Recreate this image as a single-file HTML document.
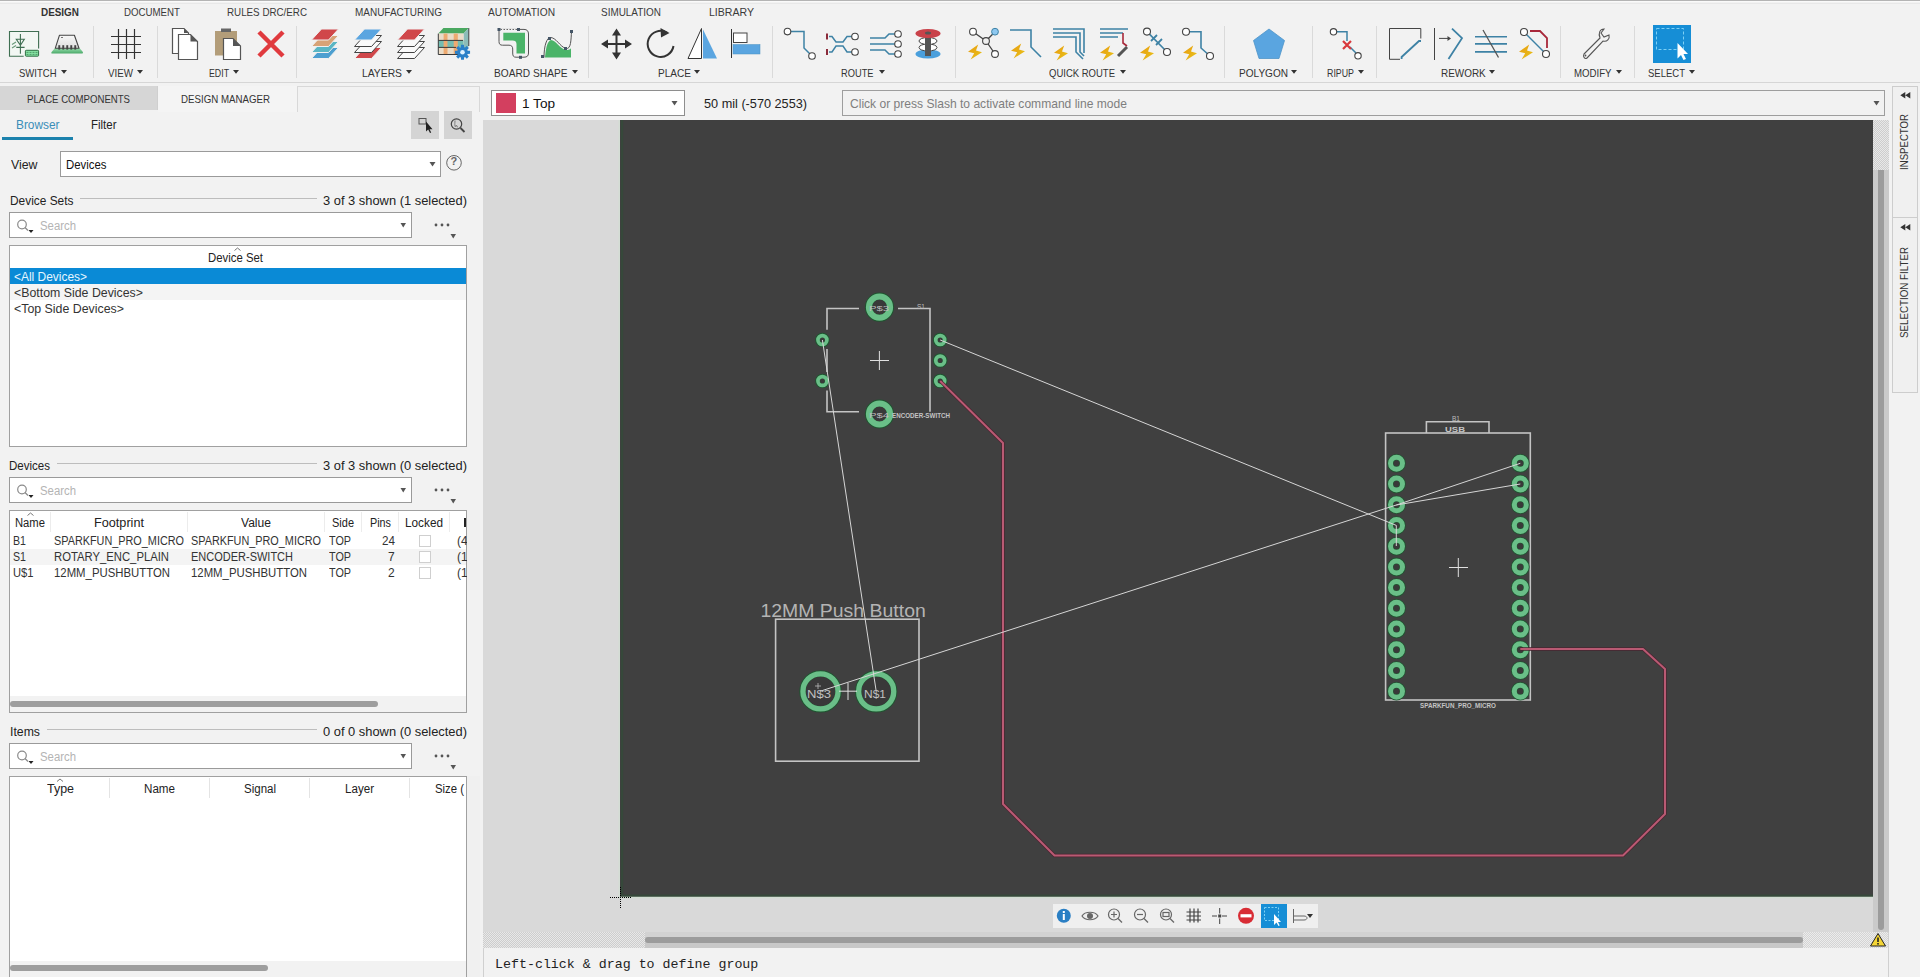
<!DOCTYPE html>
<html><head><meta charset="utf-8">
<style>
*{margin:0;padding:0;box-sizing:border-box}
html,body{width:1920px;height:977px;overflow:hidden;background:#f2f2f2;font-family:"Liberation Sans",sans-serif;color:#222}
.a{position:absolute}
.t{position:absolute;white-space:nowrap;line-height:1}
.tab{font-size:11px;color:#3a3a3a;top:7px}
.rl{font-size:11px;color:#333;top:68px}
.lp{font-size:12.5px;color:#222}
</style></head><body>
<!-- canvas toolbar -->
<div class="a" style="left:491px;top:90px;width:194px;height:26px;background:#fff;border:1px solid #8e8e8e"></div>
<div class="a" style="left:496px;top:93px;width:20px;height:20px;background:#d33f5f"></div>
<div class="t w_33" style="transform:scaleX(1.0067);transform-origin:0 0;left:522px;top:97px;font-size:13.5px;color:#111">1 Top</div>
<div class="t w_103" style="transform:scaleX(0.9401);transform-origin:0 0;left:704px;top:97px;font-size:13.5px;color:#222">50 mil (-570 2553)</div>
<div class="a" style="left:842px;top:90px;width:1043px;height:26px;background:#f2f2f2;border:1px solid #9e9e9e"></div>
<svg class="a" style="left:480px;top:85px" width="1410" height="35" viewBox="480 85 1410 35"><g fill="#555"><path d="M671.5 101h6l-3 4.5z"/><path d="M1873.5 101h6l-3 4.5z"/></g></svg>
<div class="t w_277" style="transform:scaleX(0.9283);transform-origin:0 0;left:849.5px;top:97px;font-size:13px;color:#7e7e7e">Click or press Slash to activate command line mode</div>
<!-- canvas -->
<div class="a" style="left:483px;top:120px;width:1390px;height:812px;background:#d9d9d9"></div>
<!-- vertical scrollbar -->
<div class="a" style="left:1873px;top:120px;width:16px;height:812px;background:#cacaca"></div>
<div class="a" style="left:1873px;top:120px;width:16px;height:50px;background:repeating-conic-gradient(#e8e8e8 0 25%,#cdcdcd 0 50%) 0 0/2px 2px"></div>
<div class="a" style="left:1878px;top:170px;width:6px;height:760px;background:#9c9c9c;border-radius:0 0 3px 3px"></div>
<!-- horizontal scrollbar -->
<div class="a" style="left:483px;top:932px;width:1406px;height:16px;background:#c8c8c8"></div>
<div class="a" style="left:483px;top:932px;width:1406px;height:5px;background:#d2d2d2"></div>
<div class="a" style="left:483px;top:932px;width:162px;height:16px;background:repeating-conic-gradient(#e8e8e8 0 25%,#cdcdcd 0 50%) 0 0/2px 2px"></div>
<div class="a" style="left:1803px;top:932px;width:86px;height:16px;background:repeating-conic-gradient(#ececec 0 25%,#d4d4d4 0 50%) 0 0/2px 2px"></div>
<div class="a" style="left:645px;top:937px;width:1158px;height:6px;background:#9c9c9c;border-radius:3px"></div>
<!-- status bar -->
<div class="a" style="left:483px;top:948px;width:1406px;height:29px;background:#f2f2f2;border-left:1px solid #d0d0d0"></div>
<div class="t" style="left:495px;top:958px;font-family:'Liberation Mono',monospace;font-size:13.3px;color:#222">Left-click &amp; drag to define group</div>
<div class="a" style="left:1888px;top:932px;width:1px;height:45px;background:#d0d0d0"></div>
<!-- right side panel -->
<div class="a" style="left:1892px;top:86px;width:26px;height:132px;background:#f0f0f0;border:1px solid #cdcdcd"></div>
<div class="a" style="left:1892px;top:217px;width:26px;height:176px;background:#f0f0f0;border:1px solid #cdcdcd"></div>
<div class="a" style="left:1899px;top:170px;width:60px;height:14px;transform-origin:0 0;transform:rotate(-90deg)"><div class="t w_56" style="transform:scaleX(0.8752);transform-origin:0 0;left:0;top:0;font-size:11px;color:#333">INSPECTOR</div></div>
<div class="a" style="left:1899px;top:337.5px;width:95px;height:14px;transform-origin:0 0;transform:rotate(-90deg)"><div class="t w_91" style="transform:scaleX(0.8879);transform-origin:0 0;left:0;top:0;font-size:11px;color:#333">SELECTION FILTER</div></div>
<svg class="a" style="left:1890px;top:80px" width="30" height="160" viewBox="1890 80 30 160">
<g fill="#333"><path d="M1900.3 95.2l5-3.2v6.4z M1905.3 95.2l5-3.2v6.4z"/></g>
</svg>
<svg class="a" style="left:1890px;top:220px" width="30" height="20" viewBox="1890 220 30 20">
<g fill="#333"><path d="M1900.3 227.2l5-3.2v6.4z M1905.3 227.2l5-3.2v6.4z"/></g>
</svg>

<!-- board -->
<svg class="a" style="left:483px;top:120px" width="1390" height="812" viewBox="483 120 1390 812">
<rect x="620" y="120" width="1253" height="777" fill="#404040"/>
<path d="M622 120V895.8H1873" stroke="#36483a" stroke-width="2.4" fill="none"/>
<path d="M619.2 120V897.5H1873" stroke="#d3ddd4" stroke-width="1.5" fill="none"/>
<path d="M610 897.5H631M620.5 887V908" stroke="#000" stroke-width="1" stroke-dasharray="1 1"/>
<!-- outlines -->
<g fill="none" stroke="#c4c4c4" stroke-width="1.6">
<path d="M859 308.5H827V329.7M827 349V372M827 390.5V411.7H859M898 308.5H930V411.7"/>
<rect x="775.6" y="619.2" width="143.4" height="142"/>
<rect x="1385.6" y="433" width="144.7" height="267"/>
<path d="M1426.4 433V421.7H1489V433"/>
</g>
<!-- pads -->
<g fill="none" stroke="#1f5530"><circle cx="879.5" cy="307.2" r="10.60" stroke-width="8.00"/><circle cx="879.5" cy="414.0" r="10.60" stroke-width="8.00"/><circle cx="822.4" cy="340.0" r="4.45" stroke-width="5.70"/><circle cx="822.4" cy="381.0" r="4.45" stroke-width="5.70"/><circle cx="940.2" cy="340.0" r="4.45" stroke-width="5.70"/><circle cx="940.2" cy="360.5" r="4.45" stroke-width="5.70"/><circle cx="940.2" cy="381.0" r="4.45" stroke-width="5.70"/><circle cx="820.5" cy="691.4" r="17.55" stroke-width="7.30"/><circle cx="876.2" cy="691.4" r="17.55" stroke-width="7.30"/><circle cx="1396.5" cy="463.3" r="6.0" stroke-width="6.6"/><circle cx="1396.5" cy="484.0" r="6.0" stroke-width="6.6"/><circle cx="1396.5" cy="504.7" r="6.0" stroke-width="6.6"/><circle cx="1396.5" cy="525.5" r="6.0" stroke-width="6.6"/><circle cx="1396.5" cy="546.2" r="6.0" stroke-width="6.6"/><circle cx="1396.5" cy="566.9" r="6.0" stroke-width="6.6"/><circle cx="1396.5" cy="587.6" r="6.0" stroke-width="6.6"/><circle cx="1396.5" cy="608.3" r="6.0" stroke-width="6.6"/><circle cx="1396.5" cy="629.1" r="6.0" stroke-width="6.6"/><circle cx="1396.5" cy="649.8" r="6.0" stroke-width="6.6"/><circle cx="1396.5" cy="670.5" r="6.0" stroke-width="6.6"/><circle cx="1396.5" cy="691.2" r="6.0" stroke-width="6.6"/><circle cx="1520.3" cy="463.3" r="6.0" stroke-width="6.6"/><circle cx="1520.3" cy="484.0" r="6.0" stroke-width="6.6"/><circle cx="1520.3" cy="504.7" r="6.0" stroke-width="6.6"/><circle cx="1520.3" cy="525.5" r="6.0" stroke-width="6.6"/><circle cx="1520.3" cy="546.2" r="6.0" stroke-width="6.6"/><circle cx="1520.3" cy="566.9" r="6.0" stroke-width="6.6"/><circle cx="1520.3" cy="587.6" r="6.0" stroke-width="6.6"/><circle cx="1520.3" cy="608.3" r="6.0" stroke-width="6.6"/><circle cx="1520.3" cy="629.1" r="6.0" stroke-width="6.6"/><circle cx="1520.3" cy="649.8" r="6.0" stroke-width="6.6"/><circle cx="1520.3" cy="670.5" r="6.0" stroke-width="6.6"/><circle cx="1520.3" cy="691.2" r="6.0" stroke-width="6.6"/></g>
<g fill="#393939"><circle cx="879.5" cy="307.2" r="7.40"/><circle cx="879.5" cy="414.0" r="7.40"/><circle cx="822.4" cy="340.0" r="2.40"/><circle cx="822.4" cy="381.0" r="2.40"/><circle cx="940.2" cy="340.0" r="2.40"/><circle cx="940.2" cy="360.5" r="2.40"/><circle cx="940.2" cy="381.0" r="2.40"/><circle cx="820.5" cy="691.4" r="14.70"/><circle cx="876.2" cy="691.4" r="14.70"/><circle cx="1396.5" cy="463.3" r="2.9"/><circle cx="1396.5" cy="484.0" r="2.9"/><circle cx="1396.5" cy="504.7" r="2.9"/><circle cx="1396.5" cy="525.5" r="2.9"/><circle cx="1396.5" cy="546.2" r="2.9"/><circle cx="1396.5" cy="566.9" r="2.9"/><circle cx="1396.5" cy="587.6" r="2.9"/><circle cx="1396.5" cy="608.3" r="2.9"/><circle cx="1396.5" cy="629.1" r="2.9"/><circle cx="1396.5" cy="649.8" r="2.9"/><circle cx="1396.5" cy="670.5" r="2.9"/><circle cx="1396.5" cy="691.2" r="2.9"/><circle cx="1520.3" cy="463.3" r="2.9"/><circle cx="1520.3" cy="484.0" r="2.9"/><circle cx="1520.3" cy="504.7" r="2.9"/><circle cx="1520.3" cy="525.5" r="2.9"/><circle cx="1520.3" cy="546.2" r="2.9"/><circle cx="1520.3" cy="566.9" r="2.9"/><circle cx="1520.3" cy="587.6" r="2.9"/><circle cx="1520.3" cy="608.3" r="2.9"/><circle cx="1520.3" cy="629.1" r="2.9"/><circle cx="1520.3" cy="649.8" r="2.9"/><circle cx="1520.3" cy="670.5" r="2.9"/><circle cx="1520.3" cy="691.2" r="2.9"/></g>
<g fill="none" stroke="#6abf88"><circle cx="879.5" cy="307.2" r="10.60" stroke-width="6.00"/><circle cx="879.5" cy="414.0" r="10.60" stroke-width="6.00"/><circle cx="822.4" cy="340.0" r="4.45" stroke-width="3.70"/><circle cx="822.4" cy="381.0" r="4.45" stroke-width="3.70"/><circle cx="940.2" cy="340.0" r="4.45" stroke-width="3.70"/><circle cx="940.2" cy="360.5" r="4.45" stroke-width="3.70"/><circle cx="940.2" cy="381.0" r="4.45" stroke-width="3.70"/><circle cx="820.5" cy="691.4" r="17.55" stroke-width="5.30"/><circle cx="876.2" cy="691.4" r="17.55" stroke-width="5.30"/><circle cx="1396.5" cy="463.3" r="6.0" stroke-width="5.0"/><circle cx="1396.5" cy="484.0" r="6.0" stroke-width="5.0"/><circle cx="1396.5" cy="504.7" r="6.0" stroke-width="5.0"/><circle cx="1396.5" cy="525.5" r="6.0" stroke-width="5.0"/><circle cx="1396.5" cy="546.2" r="6.0" stroke-width="5.0"/><circle cx="1396.5" cy="566.9" r="6.0" stroke-width="5.0"/><circle cx="1396.5" cy="587.6" r="6.0" stroke-width="5.0"/><circle cx="1396.5" cy="608.3" r="6.0" stroke-width="5.0"/><circle cx="1396.5" cy="629.1" r="6.0" stroke-width="5.0"/><circle cx="1396.5" cy="649.8" r="6.0" stroke-width="5.0"/><circle cx="1396.5" cy="670.5" r="6.0" stroke-width="5.0"/><circle cx="1396.5" cy="691.2" r="6.0" stroke-width="5.0"/><circle cx="1520.3" cy="463.3" r="6.0" stroke-width="5.0"/><circle cx="1520.3" cy="484.0" r="6.0" stroke-width="5.0"/><circle cx="1520.3" cy="504.7" r="6.0" stroke-width="5.0"/><circle cx="1520.3" cy="525.5" r="6.0" stroke-width="5.0"/><circle cx="1520.3" cy="546.2" r="6.0" stroke-width="5.0"/><circle cx="1520.3" cy="566.9" r="6.0" stroke-width="5.0"/><circle cx="1520.3" cy="587.6" r="6.0" stroke-width="5.0"/><circle cx="1520.3" cy="608.3" r="6.0" stroke-width="5.0"/><circle cx="1520.3" cy="629.1" r="6.0" stroke-width="5.0"/><circle cx="1520.3" cy="649.8" r="6.0" stroke-width="5.0"/><circle cx="1520.3" cy="670.5" r="6.0" stroke-width="5.0"/><circle cx="1520.3" cy="691.2" r="6.0" stroke-width="5.0"/></g>
<!-- red trace -->
<path d="M940.2 381L1003 443V804L1054.5 855.5H1623L1665 814V669L1643 649H1520.3" fill="none" stroke="#4a2430" stroke-width="3.4" stroke-linejoin="round"/>
<path d="M940.2 381L1003 443V804L1054.5 855.5H1623L1665 814V669L1643 649H1520.3" fill="none" stroke="#b95a73" stroke-width="2" stroke-linejoin="round"/>
<!-- crosses -->
<g stroke="#e0e0e0" stroke-width="1"><path d="M870 360.5H889M879.4 351V370M839 691.2H857M848 683V700M1449 567.5H1468M1458.3 558V577"/></g>
<path d="M815 686h6M818 683v6" stroke="#bbb" stroke-width="0.8"/>
<!-- airwires -->
<g stroke="#d6d6d6" stroke-width="1" fill="none">
<path d="M940.2 340L1396.3 525.4"/>
<path d="M822.4 340L876.2 691.2"/>
<path d="M820.3 691.2L1396.3 505"/>
<path d="M1396.3 505L1520.3 463.3"/>
<path d="M1396.3 505L1520.3 484"/>
<path d="M1396.3 525.4V546"/>
</g>
<!-- labels -->
<text x="760.4" y="616.7" font-family="Liberation Sans" font-size="18.5" fill="#b4b4b4" textLength="165.4" lengthAdjust="spacingAndGlyphs">12MM Push Button</text>
<g font-family="Liberation Sans" fill="#c0c0c0" font-size="11">
<text x="807" y="698" textLength="24" lengthAdjust="spacingAndGlyphs">N$3</text>
<text x="864" y="698" textLength="22" lengthAdjust="spacingAndGlyphs">N$1</text>
</g>
<g font-family="Liberation Sans" fill="#bdbdbd" font-size="8">
<text x="869" y="311" textLength="20" lengthAdjust="spacingAndGlyphs">P$3</text>
<text x="869" y="418" textLength="20" lengthAdjust="spacingAndGlyphs">P$4</text>
<text x="917" y="309" font-size="7" textLength="8" lengthAdjust="spacingAndGlyphs">S1</text>
<text x="1452" y="421" font-size="7" textLength="8" lengthAdjust="spacingAndGlyphs">B1</text>
</g>
<g font-family="Liberation Sans" font-weight="bold" fill="#c4c4c4">
<text x="892" y="418" font-size="7" textLength="58" lengthAdjust="spacingAndGlyphs">ENCODER-SWITCH</text>
<text x="1445" y="432" font-size="8" textLength="20" lengthAdjust="spacingAndGlyphs">USB</text>
<text x="1420" y="708" font-size="7" textLength="76" lengthAdjust="spacingAndGlyphs">SPARKFUN_PRO_MICRO</text>
</g>
</svg>
<!-- bottom toolbar -->
<div class="a" style="left:1053px;top:904px;width:265px;height:24px;background:#efefef"></div>
<div class="a" style="left:1261px;top:904px;width:26px;height:24px;background:#168ed6"></div>
<svg class="a" style="left:1040px;top:895px" width="300" height="40" viewBox="1040 895 300 40">
<circle cx="1063.8" cy="915.8" r="7" fill="#2a7fc4"/>
<rect x="1062.8" y="914" width="2" height="6" fill="#fff"/><rect x="1062.8" y="911" width="2" height="2" fill="#fff"/>
<path d="M1082 916C1085 911 1095 911 1098 916C1095 921 1085 921 1082 916z" fill="none" stroke="#666" stroke-width="1.2"/>
<circle cx="1090" cy="916" r="3" fill="#666"/>
<g fill="none" stroke="#666" stroke-width="1.2">
<circle cx="1114" cy="914.5" r="5.5"/><path d="M1118 918.5l4 4"/><path d="M1111 914.5h6M1114 911.5v6"/>
<circle cx="1140" cy="914.5" r="5.5"/><path d="M1144 918.5l4 4"/><path d="M1137 914.5h6"/>
<circle cx="1166" cy="914.5" r="5.5"/><path d="M1170 918.5l4 4"/><rect x="1163" y="912.5" width="6" height="4"/>
</g>
<g stroke="#444" stroke-width="1.2"><path d="M1190 908.5V922.5M1194 908.5V922.5M1198 908.5V922.5M1186.5 912H1201M1186.5 916H1201M1186.5 920H1201"/></g>
<g stroke="#444" stroke-width="1"><path d="M1212 916H1217M1222 916H1227M1219.7 908V913.5M1219.7 918.5V924"/></g>
<rect x="1218.2" y="914.5" width="3" height="3" fill="#444"/>
<circle cx="1246" cy="915.8" r="8" fill="#d82c34"/><rect x="1240.5" y="914.2" width="11" height="3.2" fill="#fff"/>
<rect x="1264.5" y="907.5" width="14" height="13" fill="none" stroke="#7cd0f5" stroke-width="1" stroke-dasharray="2 1.5"/>
<path d="M1274 914V925L1276.5 922.5L1278.5 926L1279.7 925.4L1278 922H1281z" fill="#fff"/>
<path d="M1293 916H1304M1293 920H1304M1304 916C1308 916 1308 920 1304 920M1293.5 909V923" fill="none" stroke="#666" stroke-width="1"/>
<path d="M1307 914h6l-3 4z" fill="#333"/>
</svg>
<!-- warning -->
<svg class="a" style="left:1868px;top:930px" width="20" height="18" viewBox="1868 930 20 18">
<path d="M1878 933.5L1885.5 946H1870.5z" fill="#f5d635" stroke="#222" stroke-width="1" stroke-linejoin="round"/>
<rect x="1877.2" y="937.5" width="1.6" height="4.5" fill="#222"/><rect x="1877.2" y="943" width="1.6" height="1.6" fill="#222"/>
</svg>
<!-- left panel tabs -->
<div class="a" style="left:0;top:86px;width:158px;height:24px;background:#d6d6d6;border-right:1px solid #cfcfcf"></div>
<div class="a" style="left:158px;top:86px;width:139px;height:26px;background:#f4f4f4"></div>
<div class="a" style="left:297px;top:86px;width:183px;height:26px;border-top:1px solid #d8d8d8;border-left:1px solid #d8d8d8;border-right:1px solid #d8d8d8"></div>
<div class="t w_103" style="transform:scaleX(0.9147);transform-origin:0 0;left:26.5px;top:94px;font-size:10.5px;color:#333">PLACE COMPONENTS</div>
<div class="t w_89" style="transform:scaleX(0.9245);transform-origin:0 0;left:181px;top:94px;font-size:10.5px;color:#333">DESIGN MANAGER</div>
<!-- browser/filter -->
<div class="t w_43.5" style="transform:scaleX(0.9883);transform-origin:0 0;left:15.5px;top:119px;font-size:12px;color:#3a8eb8">Browser</div>
<div class="t w_25.5" style="transform:scaleX(0.9561);transform-origin:0 0;left:90.5px;top:119px;font-size:12px;color:#222">Filter</div>
<div class="a" style="left:2px;top:137px;width:71px;height:3px;background:#1c82ad"></div>
<div class="a" style="left:411px;top:111px;width:28px;height:28px;background:#d4d4d4"></div>
<div class="a" style="left:444px;top:111px;width:28px;height:28px;background:#d4d4d4"></div>
<svg class="a" style="left:0;top:0" width="480" height="977" viewBox="0 0 480 977">
<rect x="419" y="118.5" width="7" height="5.5" fill="none" stroke="#555" stroke-width="1"/>
<path d="M426 121.5V131.5L428.2 129.5L430 133L431.2 132.4L429.6 129.2H432.5z" fill="#222"/>
<circle cx="456.5" cy="124" r="5.2" fill="none" stroke="#444" stroke-width="1.2"/>
<path d="M460.5 128l4 4" stroke="#444" stroke-width="1.8"/>
<path d="M455 120.5v6l1.5-1.2 1 2" stroke="#555" stroke-width="0.8" fill="#fff"/>
<!-- help -->
<circle cx="454" cy="162.8" r="7.3" fill="none" stroke="#666" stroke-width="1"/>
<!-- dropdown arrows -->
<g fill="#555">
<path d="M429.5 162h6l-3 4.5z"/>

<path d="M450.5 234h5.5l-2.75 4.5z"/><path d="M450.5 499h5.5l-2.75 4.5z"/><path d="M450.5 765h5.5l-2.75 4.5z"/>
<circle cx="436" cy="225" r="1.4"/><circle cx="442" cy="225" r="1.4"/><circle cx="448" cy="225" r="1.4"/>
<circle cx="436" cy="490" r="1.4"/><circle cx="442" cy="490" r="1.4"/><circle cx="448" cy="490" r="1.4"/>
<circle cx="436" cy="756" r="1.4"/><circle cx="442" cy="756" r="1.4"/><circle cx="448" cy="756" r="1.4"/>
</g>
<!-- section lines -->
<g fill="#bdbdbd">
<rect x="80" y="198" width="237" height="1"/>
<rect x="57" y="463" width="260" height="1"/>
<rect x="47" y="729" width="270" height="1"/>
</g>
</svg>
<div class="t w_26.5" style="transform:scaleX(0.9860);transform-origin:0 0;left:10.5px;top:159px;font-size:12.5px;color:#222">View</div>
<div class="a" style="left:60px;top:151px;width:381px;height:26px;background:#fff;border:1px solid #9a9a9a"></div>
<div class="t w_40.5" style="transform:scaleX(0.9108);transform-origin:0 0;left:65.5px;top:159px;font-size:12.5px;color:#111">Devices</div>
<svg class="a" style="left:420px;top:150px" width="50" height="30" viewBox="420 150 50 30"><path d="M429.5 162h6l-3 4.5z" fill="#555"/></svg>
<div class="t" style="left:450.5px;top:156px;font-size:11px;font-weight:bold;color:#666">?</div>

<div class="t w_63.5" style="transform:scaleX(0.9520);transform-origin:0 0;left:9.5px;top:195px;font-size:12.5px;color:#222">Device Sets</div>
<div class="t w_144" style="transform:scaleX(1.0310);transform-origin:0 0;left:323px;top:195px;font-size:12.5px;color:#222">3 of 3 shown (1 selected)</div>
<div class="t w_41" style="transform:scaleX(0.9220);transform-origin:0 0;left:9px;top:460px;font-size:12.5px;color:#222">Devices</div>
<div class="t w_144" style="transform:scaleX(1.0310);transform-origin:0 0;left:323px;top:460px;font-size:12.5px;color:#222">3 of 3 shown (0 selected)</div>
<div class="t w_30" style="transform:scaleX(0.9816);transform-origin:0 0;left:9.5px;top:726px;font-size:12.5px;color:#222">Items</div>
<div class="t w_144" style="transform:scaleX(1.0310);transform-origin:0 0;left:323px;top:726px;font-size:12.5px;color:#222">0 of 0 shown (0 selected)</div>

<!-- search boxes -->
<div class="a" style="left:9px;top:212px;width:403px;height:26px;background:#fff;border:1px solid #9a9a9a"></div>
<div class="a" style="left:9px;top:477px;width:403px;height:26px;background:#fff;border:1px solid #9a9a9a"></div>
<div class="a" style="left:9px;top:743px;width:403px;height:26px;background:#fff;border:1px solid #9a9a9a"></div>
<div class="t w_36" style="transform:scaleX(0.9089);transform-origin:0 0;left:40px;top:220px;font-size:12.5px;color:#b4b4b4">Search</div>
<div class="t w_36" style="transform:scaleX(0.9089);transform-origin:0 0;left:40px;top:485px;font-size:12.5px;color:#b4b4b4">Search</div>
<div class="t w_36" style="transform:scaleX(0.9089);transform-origin:0 0;left:40px;top:751px;font-size:12.5px;color:#b4b4b4">Search</div>
<svg class="a" style="left:0;top:0" width="480" height="977" viewBox="0 0 480 977">
<g fill="none" stroke="#8a8a8a" stroke-width="1.2">
<circle cx="22" cy="224.5" r="4.3"/><path d="M25 227.5l3 3"/>
<circle cx="22" cy="489.5" r="4.3"/><path d="M25 492.5l3 3"/>
<circle cx="22" cy="755.5" r="4.3"/><path d="M25 758.5l3 3"/>
</g>
<g fill="#555"><path d="M400.5 223h5.5l-2.75 4.5z"/><path d="M400.5 488h5.5l-2.75 4.5z"/><path d="M400.5 754h5.5l-2.75 4.5z"/></g><g fill="#222"><path d="M28.5 230h5l-2.5 3z"/><path d="M28.5 495h5l-2.5 3z"/><path d="M28.5 761h5l-2.5 3z"/></g>
</svg>

<!-- device set listbox -->
<div class="a" style="left:9px;top:245px;width:458px;height:202px;background:#fff;border:1px solid #a0a0a0"></div>
<div class="a" style="left:10px;top:268px;width:456px;height:16px;background:#0a8ad6"></div>
<div class="a" style="left:10px;top:284px;width:456px;height:16px;background:#f4f4f4"></div>
<div class="t w_55" style="transform:scaleX(0.9478);transform-origin:0 0;left:208px;top:252px;font-size:12px;color:#222">Device Set</div>
<div class="t w_73" style="transform:scaleX(0.9949);transform-origin:0 0;left:14px;top:271px;font-size:12px;color:#e6f6ff">&lt;All Devices&gt;</div>
<div class="t w_129" style="transform:scaleX(1.0287);transform-origin:0 0;left:14px;top:287px;font-size:12px;color:#333">&lt;Bottom Side Devices&gt;</div>
<div class="t w_110" style="transform:scaleX(1.0306);transform-origin:0 0;left:14px;top:303px;font-size:12px;color:#333">&lt;Top Side Devices&gt;</div>

<!-- devices table -->
<div class="a" style="left:9px;top:510px;width:458px;height:203px;background:#fff;border:1px solid #a0a0a0"></div>
<div class="a" style="left:10px;top:549px;width:456px;height:16px;background:#f4f4f4"></div>
<svg class="a" style="left:0;top:0" width="480" height="977" viewBox="0 0 480 977">
<g fill="#ececec"><rect x="50" y="512" width="1" height="20"/><rect x="187" y="512" width="1" height="20"/><rect x="324" y="512" width="1" height="20"/><rect x="361" y="512" width="1" height="20"/><rect x="398" y="512" width="1" height="20"/><rect x="449" y="512" width="1" height="20"/>
<rect x="109" y="778" width="1" height="20"/><rect x="209" y="778" width="1" height="20"/><rect x="309" y="778" width="1" height="20"/><rect x="409" y="778" width="1" height="20"/></g>
<path d="M27.5 515.5l3-2.5 3 2.5" fill="none" stroke="#555" stroke-width="0.8"/>
<path d="M234.5 250.5l3-2.5 3 2.5" fill="none" stroke="#555" stroke-width="0.8"/>
<path d="M57 781.5l3-2.5 3 2.5" fill="none" stroke="#555" stroke-width="0.8"/>
<g fill="#fff" stroke="#cfcfcf" stroke-width="1"><rect x="419.5" y="535.5" width="11" height="11"/><rect x="419.5" y="551.5" width="11" height="11"/><rect x="419.5" y="567.5" width="11" height="11"/></g>
</svg>
<div class="t w_30" style="transform:scaleX(0.9370);transform-origin:0 0;left:15px;top:517px;font-size:12px;color:#222">Name</div>
<div class="t w_50" style="transform:scaleX(1.0558);transform-origin:0 0;left:94px;top:517px;font-size:12px;color:#222">Footprint</div>
<div class="t w_30" style="transform:scaleX(1.0063);transform-origin:0 0;left:241px;top:517px;font-size:12px;color:#222">Value</div>
<div class="t w_22" style="transform:scaleX(0.9155);transform-origin:0 0;left:332px;top:517px;font-size:12px;color:#222">Side</div>
<div class="t w_21" style="transform:scaleX(0.8996);transform-origin:0 0;left:370px;top:517px;font-size:12px;color:#222">Pins</div>
<div class="t w_38" style="transform:scaleX(0.9818);transform-origin:0 0;left:405px;top:517px;font-size:12px;color:#222">Locked</div>
<div class="a" style="left:464px;top:518px;width:1.5px;height:9px;background:#222"></div>
<div class="t w_13" style="transform:scaleX(0.8851);transform-origin:0 0;left:13px;top:535px;font-size:12px;color:#333">B1</div>
<div class="t w_130" style="transform:scaleX(0.9040);transform-origin:0 0;left:54px;top:535px;font-size:12px;color:#333">SPARKFUN_PRO_MICRO</div>
<div class="t w_130" style="transform:scaleX(0.9040);transform-origin:0 0;left:191px;top:535px;font-size:12px;color:#333">SPARKFUN_PRO_MICRO</div>
<div class="t w_22" style="transform:scaleX(0.8997);transform-origin:0 0;left:329px;top:535px;font-size:12px;color:#333">TOP</div>
<div class="t w_13" style="transform:scaleX(0.9731);transform-origin:0 0;left:382px;top:535px;font-size:12px;color:#333">24</div>
<div class="t" style="left:457px;top:535px;font-size:12px;color:#333">(4</div>
<div class="t w_13" style="transform:scaleX(0.8851);transform-origin:0 0;left:13px;top:551px;font-size:12px;color:#333">S1</div>
<div class="t w_115" style="transform:scaleX(0.9406);transform-origin:0 0;left:54px;top:551px;font-size:12px;color:#333">ROTARY_ENC_PLAIN</div>
<div class="t w_102" style="transform:scaleX(0.9162);transform-origin:0 0;left:191px;top:551px;font-size:12px;color:#333">ENCODER-SWITCH</div>
<div class="t w_22" style="transform:scaleX(0.8997);transform-origin:0 0;left:329px;top:551px;font-size:12px;color:#333">TOP</div>
<div class="t" style="left:388px;top:551px;font-size:12px;color:#333">7</div>
<div class="t" style="left:457px;top:551px;font-size:12px;color:#333">(1</div>
<div class="t w_20.5" style="transform:scaleX(0.9312);transform-origin:0 0;left:13px;top:567px;font-size:12px;color:#333">U$1</div>
<div class="t w_116" style="transform:scaleX(0.9472);transform-origin:0 0;left:54px;top:567px;font-size:12px;color:#333">12MM_PUSHBUTTON</div>
<div class="t w_116" style="transform:scaleX(0.9472);transform-origin:0 0;left:191px;top:567px;font-size:12px;color:#333">12MM_PUSHBUTTON</div>
<div class="t w_22" style="transform:scaleX(0.8997);transform-origin:0 0;left:329px;top:567px;font-size:12px;color:#333">TOP</div>
<div class="t" style="left:388px;top:567px;font-size:12px;color:#333">2</div>
<div class="t" style="left:457px;top:567px;font-size:12px;color:#333">(1</div>
<div class="a" style="left:467px;top:510px;width:13px;height:80px;background:#f0f0f0"></div>
<!-- devices scrollbar -->
<div class="a" style="left:10px;top:696px;width:456px;height:16px;background:#f2f2f2"></div>
<div class="a" style="left:10px;top:701px;width:368px;height:6px;background:#9e9e9e;border-radius:3px"></div>

<!-- items table -->
<div class="a" style="left:9px;top:776px;width:458px;height:210px;background:#fff;border:1px solid #a0a0a0"></div>
<svg class="a" style="left:0;top:770px" width="480" height="40" viewBox="0 770 480 40"><g fill="#e4e4e4"><rect x="109" y="778" width="1" height="20"/><rect x="209" y="778" width="1" height="20"/><rect x="309" y="778" width="1" height="20"/><rect x="409" y="778" width="1" height="20"/></g><path d="M57 781.5l3-2.5 3 2.5" fill="none" stroke="#555" stroke-width="0.8"/></svg>
<div class="t w_27" style="transform:scaleX(1.0378);transform-origin:0 0;left:47px;top:783px;font-size:12px;color:#222">Type</div>
<div class="t w_31" style="transform:scaleX(0.9683);transform-origin:0 0;left:144px;top:783px;font-size:12px;color:#222">Name</div>
<div class="t w_32" style="transform:scaleX(0.9593);transform-origin:0 0;left:244px;top:783px;font-size:12px;color:#222">Signal</div>
<div class="t w_29" style="transform:scaleX(0.9657);transform-origin:0 0;left:345px;top:783px;font-size:12px;color:#222">Layer</div>
<div class="t w_29" style="transform:scaleX(0.9450);transform-origin:0 0;left:435px;top:783px;font-size:12px;color:#222">Size (</div>
<div class="a" style="left:467px;top:776px;width:13px;height:201px;background:#f0f0f0"></div>
<div class="a" style="left:10px;top:961px;width:456px;height:16px;background:#f2f2f2"></div>
<div class="a" style="left:10px;top:965px;width:258px;height:6px;background:#9e9e9e;border-radius:3px"></div>
<!-- top line -->
<div class="a" style="left:0;top:0;width:1920px;height:1px;background:#b4b4b4"></div><div class="a" style="left:0;top:1px;width:1920px;height:1px;background:#fafafa"></div><div class="a" style="left:0;top:3px;width:1920px;height:1px;background:#e8e8e8"></div>
<div class="a" style="left:0;top:82px;width:1920px;height:1px;background:#d6d6d6"></div>
<!-- tabs -->
<div class="t tab w_38" style="transform:scaleX(0.9007);transform-origin:0 0;left:41px;font-weight:bold;color:#333">DESIGN</div>
<div class="t tab w_56" style="transform:scaleX(0.8810);transform-origin:0 0;left:124px">DOCUMENT</div>
<div class="t tab w_80" style="transform:scaleX(0.8903);transform-origin:0 0;left:227px">RULES DRC/ERC</div>
<div class="t tab w_87" style="transform:scaleX(0.9067);transform-origin:0 0;left:355px">MANUFACTURING</div>
<div class="t tab w_67" style="transform:scaleX(0.9263);transform-origin:0 0;left:488px">AUTOMATION</div>
<div class="t tab w_60" style="transform:scaleX(0.9033);transform-origin:0 0;left:601px">SIMULATION</div>
<div class="t tab w_45" style="transform:scaleX(0.9600);transform-origin:0 0;left:709px">LIBRARY</div>
<!-- labels -->
<div class="t rl w_37.5" style="transform:scaleX(0.8642);transform-origin:0 0;left:19px">SWITCH</div>
<div class="t rl w_25" style="transform:scaleX(0.8889);transform-origin:0 0;left:108px">VIEW</div>
<div class="t rl w_20" style="transform:scaleX(0.7980);transform-origin:0 0;left:209px">EDIT</div>
<div class="t rl w_40" style="transform:scaleX(0.9391);transform-origin:0 0;left:362px">LAYERS</div>
<div class="t rl w_73.5" style="transform:scaleX(0.9249);transform-origin:0 0;left:494px">BOARD SHAPE</div>
<div class="t rl w_33" style="transform:scaleX(0.9147);transform-origin:0 0;left:658px">PLACE</div>
<div class="t rl w_32.5" style="transform:scaleX(0.8442);transform-origin:0 0;left:841px">ROUTE</div>
<div class="t rl w_66" style="transform:scaleX(0.8638);transform-origin:0 0;left:1049px">QUICK ROUTE</div>
<div class="t rl w_49" style="transform:scaleX(0.9143);transform-origin:0 0;left:1239px">POLYGON</div>
<div class="t rl w_27" style="transform:scaleX(0.8030);transform-origin:0 0;left:1327px">RIPUP</div>
<div class="t rl w_44.7" style="transform:scaleX(0.9030);transform-origin:0 0;left:1441px">REWORK</div>
<div class="t rl w_37.5" style="transform:scaleX(0.8766);transform-origin:0 0;left:1574px">MODIFY</div>
<div class="t rl w_37" style="transform:scaleX(0.8645);transform-origin:0 0;left:1648px">SELECT</div>
<svg class="a" style="left:0;top:0" width="1920" height="82" viewBox="0 0 1920 82">
<g fill="#333"><path d="M61 70h6l-3 3.8z"/><path d="M137 70h6l-3 3.8z"/><path d="M233 70h6l-3 3.8z"/><path d="M406 70h6l-3 3.8z"/><path d="M572 70h6l-3 3.8z"/><path d="M694 70h6l-3 3.8z"/><path d="M879 70h6l-3 3.8z"/><path d="M1120 70h6l-3 3.8z"/><path d="M1291 70h6l-3 3.8z"/><path d="M1358 70h6l-3 3.8z"/><path d="M1489 70h6l-3 3.8z"/><path d="M1616 70h6l-3 3.8z"/><path d="M1689 70h6l-3 3.8z"/></g>
<g fill="#dadada">
<rect x="93" y="26" width="1" height="52"/><rect x="157" y="26" width="1" height="52"/><rect x="296" y="26" width="1" height="52"/>
<rect x="588" y="26" width="1" height="52"/><rect x="772" y="26" width="1" height="52"/><rect x="955" y="26" width="1" height="52"/>
<rect x="1224" y="26" width="1" height="52"/><rect x="1312" y="26" width="1" height="52"/><rect x="1376" y="26" width="1" height="52"/>
<rect x="1560" y="26" width="1" height="52"/><rect x="1634" y="26" width="1" height="52"/>
</g>
<!-- switch schematic -->
<rect x="9.5" y="31.5" width="29" height="24.7" fill="#f2f7f3"/>
<g fill="none" stroke="#3f6f52" stroke-width="1.1">
<path d="M23.7 56.2H9.5V31.5H38.6V48.5"/>
<path d="M20.4 34V53.8M16.3 47.4H24.6M16.3 39.3H24.3L20.4 45.2z"/>
</g>
<path d="M12 44.5l4-2.5M12 48l4-2.5" stroke="#6a9a7a" stroke-width="1.1"/>
<rect x="25.4" y="50.3" width="13.2" height="5.9" rx="0.8" fill="#86e3a2" stroke="#2f6e45" stroke-width="1"/>
<path d="M26.5 52.4H37.5M26.5 54.4H37.5" stroke="#3a7a50" stroke-width="0.7" stroke-dasharray="2 1"/>
<!-- switch board -->
<defs><linearGradient id="gb" x1="0" y1="0" x2="0" y2="1"><stop offset="0" stop-color="#9ae0b0"/><stop offset="1" stop-color="#4aa868"/></linearGradient>
<linearGradient id="gw" x1="0" y1="0" x2="0" y2="1"><stop offset="0" stop-color="#f8f8f8"/><stop offset="1" stop-color="#dedede"/></linearGradient></defs>
<path d="M52.5 53.6C51 53.6 51 52.5 52 51.5L55 48H79.5L82.5 51.5C83.5 52.5 83 53.6 81.5 53.6z" fill="url(#gb)"/>
<path d="M55.3 48.2L59.5 35.2H74.4L79 48.2z" fill="url(#gw)" stroke="#444" stroke-width="1.1" stroke-linejoin="round"/>
<g fill="#444"><rect x="58.3" y="45.2" width="1.9" height="4.4"/><rect x="62.3" y="45.2" width="1.9" height="4.4"/><rect x="66.3" y="45.2" width="1.9" height="4.4"/><rect x="70.3" y="45.2" width="1.9" height="4.4"/><rect x="74.3" y="45.2" width="1.9" height="4.4"/></g>
<path d="M61 37.5h2" stroke="#555" stroke-width="0.8"/>
<!-- grid -->
<g stroke="#333" stroke-width="1.2"><path d="M118.5 29V59M126.5 29V59M134.5 29V59M111 36.5H141M111 44.5H141M111 52.5H141"/></g>
<!-- copy -->
<g fill="#fff" stroke="#555" stroke-width="1.2">
<path d="M172.5 53.5V28.5H184L188.5 33V53.5z"/>
<path d="M178.5 59.5V34.5H190.5L197.5 41.5V59.5z"/>
</g>
<path d="M184 28.5l4.5 4.5H184z" fill="#555"/><path d="M190.5 34.5l7 7h-7z" fill="#555"/>
<!-- paste -->
<rect x="215" y="31" width="22" height="24.5" fill="#b39d79"/>
<rect x="221" y="28.5" width="10" height="3.5" fill="#666"/>
<path d="M223.5 59.5V38.5H233L240.5 46V59.5z" fill="#fff" stroke="#555" stroke-width="1.2"/>
<path d="M233 38.5l7.5 7.5H233z" fill="#555"/>
<!-- delete -->
<path d="M259 32L283 56M283 32L259 56" stroke="#e03a3e" stroke-width="4.5"/>
<!-- layers1 -->
<path d="M321.5 47.5H338.5L328.5 58.5H311.5z" fill="#4d9fd0" stroke="#f0f0f0" stroke-width="1" stroke-linejoin="round"/><path d="M321.5 41.5H338.5L328.5 52.5H311.5z" fill="#5ab6c4" stroke="#f0f0f0" stroke-width="1" stroke-linejoin="round"/><path d="M321.5 35.5H338.5L328.5 46.5H311.5z" fill="#d8a377" stroke="#f0f0f0" stroke-width="1" stroke-linejoin="round"/><path d="M321.5 29.0H338.5L328.5 40.0H311.5z" fill="#d0474a" stroke="#f0f0f0" stroke-width="1" stroke-linejoin="round"/>
<!-- layers2 -->
<path d="M364.5 47.5H381.5L371.5 58.5H354.5z" fill="#d0474a" stroke="#f0f0f0" stroke-width="1" stroke-linejoin="round"/><path d="M364.5 41.5H381.5L371.5 52.5H354.5z" fill="#fafafa" stroke="#444" stroke-width="1" stroke-linejoin="round"/><path d="M364.5 35.5H381.5L371.5 46.5H354.5z" fill="#fafafa" stroke="#444" stroke-width="1" stroke-linejoin="round"/><path d="M364.5 29.0H381.5L371.5 40.0H354.5z" fill="#5aa5e0" stroke="#f0f0f0" stroke-width="1" stroke-linejoin="round"/>
<!-- layers3 -->
<path d="M407.5 47.5H424.5L414.5 58.5H397.5z" fill="#fafafa" stroke="#444" stroke-width="1" stroke-linejoin="round"/><path d="M407.5 41.5H424.5L414.5 52.5H397.5z" fill="#fafafa" stroke="#444" stroke-width="1" stroke-linejoin="round"/><path d="M407.5 35.5H424.5L414.5 46.5H397.5z" fill="#fafafa" stroke="#444" stroke-width="1" stroke-linejoin="round"/><path d="M407.5 29.0H424.5L414.5 40.0H397.5z" fill="#d0474a" stroke="#f0f0f0" stroke-width="1" stroke-linejoin="round"/>
<!-- layers settings -->
<path d="M438.3 33.6L443.4 28.1H468.8L463.5 33.6z" fill="#4aa860"/>
<path d="M463.5 33.6L468.8 28.1V46L463.5 51z" fill="#8cbcb8"/>
<rect x="438.3" y="33.6" width="25.2" height="20.9" fill="#eadcc8"/>
<rect x="438.3" y="40.4" width="25.2" height="7" fill="#74bdb2"/>
<rect x="443.6" y="33.6" width="3.9" height="20.9" fill="#eeaa70"/>
<rect x="453.7" y="33.6" width="4.1" height="20.9" fill="#eeaa70"/>
<path d="M438.3 33.6V54.5H463.5M438.3 40.4H463M438.3 47.4H456" fill="none" stroke="#3a3a3a" stroke-width="1"/>
<path d="M468.8 28.1V46" stroke="#444" stroke-width="1"/>
<path d="M467.66 50.70 L470.06 50.85 L470.06 53.75 L467.66 53.90 L467.28 54.82 L468.88 56.62 L466.82 58.68 L465.02 57.08 L464.10 57.46 L463.95 59.86 L461.05 59.86 L460.90 57.46 L459.98 57.08 L458.18 58.68 L456.12 56.62 L457.72 54.82 L457.34 53.90 L454.94 53.75 L454.94 50.85 L457.34 50.70 L457.72 49.78 L456.12 47.98 L458.18 45.92 L459.98 47.52 L460.90 47.14 L461.05 44.74 L463.95 44.74 L464.10 47.14 L465.02 47.52 L466.82 45.92 L468.88 47.98 L467.28 49.78z" fill="#2a80c8"/>
<circle cx="462.5" cy="52.3" r="2.3" fill="#dff2ff"/>
<!-- board shape 1 -->
<path d="M499 29.4H524C527 29.4 528.5 31 528.5 34V53C528.5 56 527 57.2 524 57.2H516C513.5 57.2 512.7 56 512.7 53V49C512.7 46.5 511.5 45.2 509 45.2H502.5C500 45.2 499 44 499 41.5V29.4" fill="none" stroke="#555" stroke-width="1"/>
<path d="M499 29.4H518" stroke="#f0f0f0" stroke-width="1.2" stroke-dasharray="1.5 1.5"/>
<path d="M503.3 32.8H525V53.5H516.5V44C516.5 41.5 515 40.4 512.5 40.4H503.3z" fill="#4ab468"/>
<g fill="#456"><rect x="497.5" y="28" width="3" height="3"/><rect x="517" y="28" width="3" height="3"/><rect x="519" y="55.8" width="3" height="3"/></g>
<!-- board shape 2 -->
<path d="M544 57.5C544 45 547 38 550 37.5C556 37 560 47 566 48.5C571 49.5 571 40 571.5 31.5" fill="none" stroke="#555" stroke-width="1"/>
<path d="M545 57.5C546 45 548 41 551 40C556 40 560 49 566 50C570 50 571 48.5 571 48V57.5z" fill="#4ab468"/>
<g fill="#456"><rect x="541" y="55" width="3" height="3"/><rect x="548" y="37" width="3" height="3"/><rect x="564" y="47" width="3" height="3"/><rect x="570" y="30" width="3" height="3"/></g>
<!-- move -->
<g fill="#333"><path d="M616.5 28.5l-4.5 7h9z M616.5 59.5l-4.5-7h9z M601 44l7-4.5v9z M632 44l-7-4.5v9z"/></g>
<path d="M616.5 34V54M606 44H627" stroke="#333" stroke-width="2"/>
<!-- rotate -->
<path d="M667 32.5A13 13 0 1 0 673.5 46" fill="none" stroke="#333" stroke-width="2"/>
<path d="M660.5 28L669.5 33L661 37.5z" fill="#333"/>
<!-- mirror -->
<path d="M701.5 28.5V58.5H688z" fill="#fff" stroke="#333" stroke-width="1"/>
<path d="M703 29.5V58.5H717z" fill="#5aa5e0"/>
<!-- align -->
<path d="M731.5 29V58" stroke="#333" stroke-width="1"/>
<rect x="733.5" y="33" width="13.5" height="9.5" fill="#fff" stroke="#444" stroke-width="1"/>
<rect x="733" y="44.5" width="27" height="9.5" fill="#5aa5e0" stroke="#4a90c0" stroke-width="0.5"/>
<!-- route -->
<g fill="none" stroke="#3e82a5" stroke-width="1.5"><path d="M790.5 31.6H804V48L810 54"/></g>
<g fill="#fff" stroke="#444" stroke-width="1.1"><circle cx="787.5" cy="31.6" r="3.3"/><circle cx="812" cy="56" r="3.3"/></g>
<!-- swap -->
<g fill="none" stroke="#3e82a5" stroke-width="1.5"><path d="M829 36.5H832L836 42H843L847 36.5H852M829 52H832L836 46H843L847 52H852"/></g>
<path d="M827 33.5v6M827 49v6" stroke="#8b2b3a" stroke-width="2"/>
<g fill="#fff" stroke="#444" stroke-width="1.1"><circle cx="855" cy="36.5" r="3.3"/><circle cx="855" cy="52" r="3.3"/></g>
<!-- multi -->
<g fill="none" stroke="#3e82a5" stroke-width="1.5"><path d="M870 38H885L889 34H895M870 44H895M870 50H885L889 54H895"/></g>
<g fill="#fff" stroke="#444" stroke-width="1.1"><circle cx="898" cy="34" r="3.3"/><circle cx="898" cy="44" r="3.3"/><circle cx="898" cy="54" r="3.3"/></g>
<!-- via -->
<ellipse cx="928" cy="54" rx="12.5" ry="4.5" fill="#4a9fdc"/>
<ellipse cx="928" cy="47.5" rx="9" ry="3.5" fill="#fff" stroke="#444" stroke-width="1"/>
<ellipse cx="928" cy="41" rx="9" ry="3.5" fill="#fff" stroke="#444" stroke-width="1"/>
<rect x="925" y="34" width="6" height="22" fill="#555"/>
<ellipse cx="928" cy="33.5" rx="12.5" ry="4.5" fill="#c9424a"/>
<ellipse cx="928" cy="33" rx="3" ry="1.5" fill="#555"/>
<!-- lightning symbol -->
<defs><linearGradient id="lg" x1="0" y1="0" x2="1" y2="1"><stop offset="0" stop-color="#e89a12"/><stop offset="1" stop-color="#e8c418"/></linearGradient><path id="lt" d="M10.2 0.4L0 7.8L6.2 9.2L2.6 15.4L14 8.2L8 6.6z" fill="url(#lg)"/></defs>
<!-- QR1 -->
<path d="M973 31.7L986 41L995 54M986 41L995 31.7" stroke="#444" stroke-width="1.3" fill="none"/>
<circle cx="973" cy="31.7" r="3.4" fill="#fff" stroke="#444" stroke-width="1.1"/>
<circle cx="995" cy="31.7" r="3.4" fill="#8ec8f0" stroke="#3e82a5" stroke-width="1"/>
<circle cx="986" cy="41" r="3.4" fill="#f0f0f0" stroke="#444" stroke-width="1.1"/>
<circle cx="995" cy="54" r="3.4" fill="#fff" stroke="#444" stroke-width="1.1"/>
<use href="#lt" x="968" y="44"/>
<!-- QR2 -->
<path d="M1010 30H1031V47L1041 57" stroke="#3e82a5" stroke-width="1.6" fill="none"/>
<use href="#lt" x="1011" y="43"/>
<!-- QR3 -->
<path d="M1053 29H1084V52L1084 53M1053 33H1080V52L1084 56M1053 37H1076V52L1083 59" stroke="#3e82a5" stroke-width="1.6" fill="none"/>
<use href="#lt" x="1054" y="45"/>
<!-- QR4 -->
<path d="M1100 29H1128M1100 33H1123M1100 37H1118" stroke="#3e82a5" stroke-width="1.6" fill="none"/>
<path d="M1123 33V43L1127 46" stroke="#a8283a" stroke-width="1.6" fill="none"/>
<path d="M1127 47L1118 56" stroke="#555" stroke-width="3" fill="none"/>
<use href="#lt" x="1100" y="45"/>
<!-- QR5 -->
<path d="M1147 31.6L1167 52" stroke="#3e82a5" stroke-width="1.6"/>
<path d="M1151 41L1157 35M1156 45L1162 39" stroke="#3e82a5" stroke-width="1.8"/>
<circle cx="1147" cy="31.6" r="3.5" fill="#fff" stroke="#444" stroke-width="1.1"/>
<circle cx="1167" cy="52" r="3.5" fill="#fff" stroke="#444" stroke-width="1.1"/>
<use href="#lt" x="1140" y="45"/>
<!-- QR6 -->
<path d="M1186 31.7H1201V48L1210 56" stroke="#3e82a5" stroke-width="1.6" fill="none"/>
<circle cx="1186" cy="31.7" r="3.5" fill="#fff" stroke="#444" stroke-width="1.1"/>
<circle cx="1210" cy="56" r="3.5" fill="#fff" stroke="#444" stroke-width="1.1"/>
<use href="#lt" x="1183" y="45"/>
<!-- polygon -->
<path d="M1269 29L1284.5 40.5L1279 58.5H1259L1253.5 40.5z" fill="#5aa5e0" stroke="#4f94c8" stroke-width="0.8"/>
<!-- ripup -->
<path d="M1336.5 31.8H1347V41M1350 47L1356 53" stroke="#3e82a5" stroke-width="1.5" fill="none"/>
<path d="M1343 41l8 8M1351 41l-8 8" stroke="#d8383c" stroke-width="2.2"/>
<circle cx="1333.5" cy="31.8" r="3.2" fill="#fff" stroke="#444" stroke-width="1.1"/>
<circle cx="1358" cy="55.8" r="3.2" fill="#fff" stroke="#444" stroke-width="1.1"/>
<!-- rework1 -->
<path d="M1400 59.3H1389.5V28.5H1420.8V38.5" stroke="#444" stroke-width="1" fill="none"/>
<path d="M1401.6 59L1401.6 57L1419 41H1421" stroke="#3e82a5" stroke-width="1.8" fill="none"/>
<!-- rework2 -->
<path d="M1434.5 28V60" stroke="#444" stroke-width="1"/>
<path d="M1439 38.4H1450" stroke="#444" stroke-width="1"/><path d="M1451 38.4l-3.5-2.5v5z" fill="#444"/>
<path d="M1452 28.6L1462 38.2L1448.5 59" stroke="#3e82a5" stroke-width="1.8" fill="none"/>
<!-- rework3 -->
<path d="M1475 36.8H1507M1475 43.9H1507M1475 51.9H1507" stroke="#3e82a5" stroke-width="1.6"/>
<path d="M1483 30L1498.5 57.5" stroke="#555" stroke-width="1.3"/>
<!-- rework4 -->
<path d="M1524 32L1546 54" stroke="#3e82a5" stroke-width="1.5"/>
<path d="M1530 31H1540L1547 38V48" stroke="#a8283a" stroke-width="1.8" fill="none"/>
<circle cx="1524" cy="32" r="3.5" fill="#fff" stroke="#444" stroke-width="1.1"/>
<circle cx="1546" cy="54" r="3.5" fill="#fff" stroke="#444" stroke-width="1.1"/>
<use href="#lt" x="1519" y="44"/>
<!-- wrench -->
<path d="M1584 54L1600 38C1598 33 1600 29 1604 29L1601 33L1604 37L1609 35C1610 39 1607 42 1603 41L1587 58C1585 59.5 1582.5 57 1584 54z" fill="none" stroke="#555" stroke-width="1.1"/>
<circle cx="1585.5" cy="55.5" r="0.9" fill="#555"/>
<!-- select -->
<rect x="1653" y="25" width="38" height="38" fill="#168ed6"/>
<rect x="1656.5" y="28.5" width="27" height="21" fill="none" stroke="#7cd0f5" stroke-width="1" stroke-dasharray="3 2"/>
<path d="M1677.5 43V58.5L1681 55L1683.5 60L1686 59L1683.5 54L1688 54z" fill="#fff"/>
</svg>
</body></html>
